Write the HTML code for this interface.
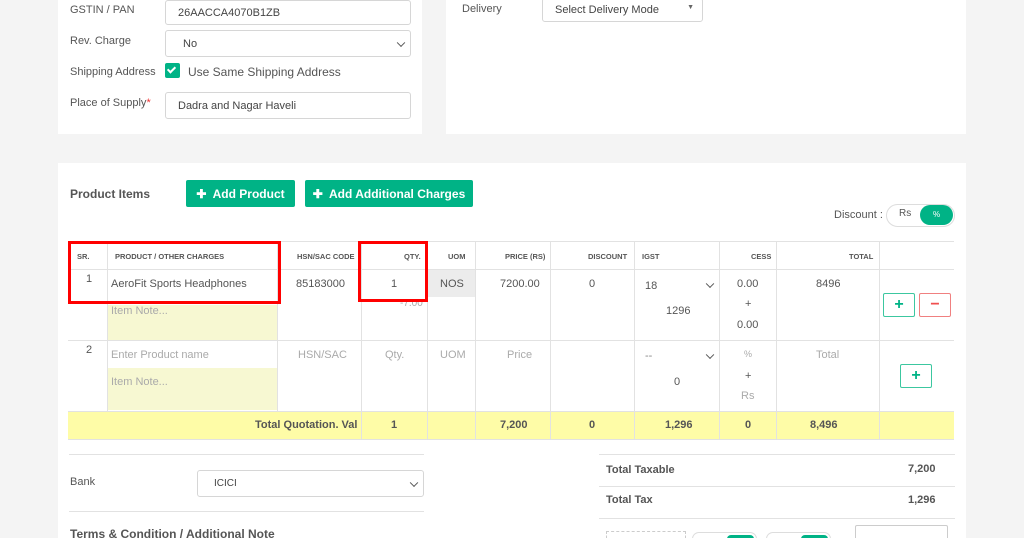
<!DOCTYPE html>
<html style="height:538px;overflow:hidden"><head><meta charset="utf-8"><style>
*{box-sizing:border-box;margin:0;padding:0}
body{width:1024px;height:538px;overflow:hidden;background:#f4f4f4;font-family:"Liberation Sans",sans-serif;color:#444;font-size:11px;position:relative}
.a{position:absolute}
.card{position:absolute;background:#fff}
.inp{position:absolute;border:1px solid #d6d6d6;border-radius:3px;background:#fff;font-size:11px;color:#444;padding-left:12px;display:flex;align-items:center}
.chev{position:absolute;right:6px;top:50%;width:6px;height:6px;border-right:1.6px solid #555;border-bottom:1.6px solid #555;transform:translateY(-70%) rotate(45deg)}
.btn{position:absolute;background:#00b386;color:#fff;font-weight:bold;font-size:12px;display:flex;align-items:center;justify-content:center;border-radius:2px}
.vl{position:absolute;width:1px;background:#e2e2e2}
.hl{position:absolute;height:1px;background:#e2e2e2}
.th{position:absolute;font-size:7.5px;font-weight:bold;color:#555;top:252px}
.t{position:absolute;font-size:11px;color:#555}
.ph{color:#aaa}
.red{position:absolute;border:3px solid #f00}
.sb{position:absolute;background:#fff;border-radius:2px;display:flex;align-items:center;justify-content:center;font-weight:bold;font-size:16px}
</style></head><body>
<div class="card" style="left:58px;top:0;width:364px;height:134px"></div>
<div class="card" style="left:446px;top:0;width:520px;height:134px"></div>
<div class="card" style="left:58px;top:163px;width:908px;height:375px"></div>

<div class="t" style="left:70px;top:4px">GSTIN / PAN</div>
<div class="inp" style="left:165px;top:0;width:246px;height:25px">26AACCA4070B1ZB</div>
<div class="t" style="left:70px;top:35px">Rev. Charge</div>
<div class="inp" style="left:165px;top:30px;width:246px;height:27px;padding-left:17px">No<span class="chev"></span></div>
<div class="t" style="left:70px;top:66px">Shipping Address</div>
<div class="a" style="left:165px;top:63px;width:15px;height:15px;background:#00b386;border-radius:2px"><div class="a" style="left:4px;top:2px;width:5px;height:8px;border-right:2px solid #fff;border-bottom:2px solid #fff;transform:rotate(45deg)"></div></div>
<div class="t" style="left:188px;top:65px;font-size:12px">Use Same Shipping Address</div>
<div class="t" style="left:70px;top:97px">Place of Supply<span style="color:#e33">*</span></div>
<div class="inp" style="left:165px;top:92px;width:246px;height:27px">Dadra and Nagar Haveli</div>

<div class="t" style="left:462px;top:3px">Delivery</div>
<div class="inp" style="left:542px;top:-2px;width:161px;height:24px;padding-left:12px">Select Delivery Mode<span class="a" style="right:8px;top:5px;font-size:7px;color:#666">▼</span></div>

<div class="t" style="left:70px;top:187px;font-weight:bold;font-size:12px">Product Items</div>
<div class="btn" style="left:186px;top:180px;width:109px;height:27px">✚&nbsp; Add Product</div>
<div class="btn" style="left:305px;top:180px;width:168px;height:27px">✚&nbsp; Add Additional Charges</div>

<div class="t" style="left:834px;top:209px">Discount :</div>
<div class="a" style="left:886px;top:204px;width:69px;height:23px;border:1px solid #ddd;border-radius:12px;background:#fff"></div>
<div class="t" style="left:899px;top:208px;font-size:10px">Rs</div>
<div class="a" style="left:920px;top:205px;width:33px;height:20px;border-radius:10px;background:#00b386;color:#fff;font-size:8px;text-align:center;line-height:20px">%</div>

<div class="a" style="left:68px;top:411px;width:886px;height:28px;background:#fefca7"></div>
<div class="a" style="left:108px;top:305px;width:169px;height:35px;background:#f7f8d2"></div>
<div class="a" style="left:108px;top:368px;width:169px;height:42px;background:#f7f8d2"></div>
<div class="a" style="left:428px;top:270px;width:47px;height:27px;background:#ececec"></div>
<div class="hl" style="left:68px;top:241px;width:886px"></div>
<div class="hl" style="left:68px;top:269px;width:886px"></div>
<div class="hl" style="left:68px;top:340px;width:886px"></div>
<div class="hl" style="left:68px;top:411px;width:886px"></div>
<div class="hl" style="left:68px;top:439px;width:886px"></div>
<div class="vl" style="left:107px;top:241px;height:170px"></div>
<div class="vl" style="left:277px;top:241px;height:170px"></div>
<div class="vl" style="left:361px;top:241px;height:198px"></div>
<div class="vl" style="left:427px;top:241px;height:198px"></div>
<div class="vl" style="left:475px;top:241px;height:198px"></div>
<div class="vl" style="left:550px;top:241px;height:198px"></div>
<div class="vl" style="left:634px;top:241px;height:198px"></div>
<div class="vl" style="left:719px;top:241px;height:198px"></div>
<div class="vl" style="left:776px;top:241px;height:198px"></div>
<div class="vl" style="left:879px;top:241px;height:198px"></div>

<div class="th" style="left:77px">SR.</div>
<div class="th" style="left:115px">PRODUCT / OTHER CHARGES</div>
<div class="th" style="left:297px">HSN/SAC CODE</div>
<div class="th" style="left:404px">QTY.</div>
<div class="th" style="left:448px">UOM</div>
<div class="th" style="left:505px">PRICE (RS)</div>
<div class="th" style="left:588px">DISCOUNT</div>
<div class="th" style="left:642px">IGST</div>
<div class="th" style="left:751px">CESS</div>
<div class="th" style="left:849px">TOTAL</div>

<div class="t" style="left:86px;top:273px">1</div>
<div class="t" style="left:111px;top:278px">AeroFit Sports Headphones</div>
<div class="t ph" style="left:111px;top:305px">Item Note...</div>
<div class="t" style="left:296px;top:278px">85183000</div>
<div class="t" style="left:391px;top:278px">1</div>
<div class="t ph" style="left:400px;top:298px;font-size:10px">-7.00</div>
<div class="t" style="left:440px;top:278px">NOS</div>
<div class="t" style="left:500px;top:278px">7200.00</div>
<div class="t" style="left:589px;top:278px">0</div>
<div class="t" style="left:645px;top:280px">18</div><span class="chev" style="left:707px;right:auto;top:285px"></span>
<div class="t" style="left:666px;top:305px">1296</div>
<div class="t" style="left:737px;top:278px">0.00</div>
<div class="t" style="left:745px;top:298px">+</div>
<div class="t" style="left:737px;top:319px">0.00</div>
<div class="t" style="left:816px;top:278px">8496</div>
<div class="sb" style="left:883px;top:293px;width:32px;height:24px;border:1px solid #3cc7a0;color:#00b386">+</div>
<div class="sb" style="left:919px;top:293px;width:32px;height:24px;border:1px solid #f08080;color:#f05050">−</div>

<div class="t" style="left:86px;top:344px">2</div>
<div class="t ph" style="left:111px;top:349px">Enter Product name</div>
<div class="t ph" style="left:111px;top:376px">Item Note...</div>
<div class="t ph" style="left:298px;top:349px">HSN/SAC</div>
<div class="t ph" style="left:385px;top:349px">Qty.</div>
<div class="t ph" style="left:440px;top:349px">UOM</div>
<div class="t ph" style="left:507px;top:349px">Price</div>
<div class="t" style="left:645px;top:350px;color:#888">--</div><span class="chev" style="left:707px;right:auto;top:356px"></span>
<div class="t" style="left:674px;top:376px">0</div>
<div class="t ph" style="left:744px;top:349px;font-size:9px">%</div>
<div class="t" style="left:745px;top:370px">+</div>
<div class="t ph" style="left:741px;top:390px">Rs</div>
<div class="t ph" style="left:816px;top:349px">Total</div>
<div class="sb" style="left:900px;top:364px;width:32px;height:24px;border:1px solid #3cc7a0;color:#00b386">+</div>

<div class="t" style="left:255px;top:419px;font-weight:bold">Total Quotation. Val</div>
<div class="t" style="left:391px;top:419px;font-weight:bold">1</div>
<div class="t" style="left:500px;top:419px;font-weight:bold">7,200</div>
<div class="t" style="left:589px;top:419px;font-weight:bold">0</div>
<div class="t" style="left:665px;top:419px;font-weight:bold">1,296</div>
<div class="t" style="left:745px;top:419px;font-weight:bold">0</div>
<div class="t" style="left:810px;top:419px;font-weight:bold">8,496</div>

<div class="red" style="left:68px;top:241px;width:213px;height:63px"></div>
<div class="red" style="left:358px;top:241px;width:70px;height:61px"></div>

<div class="hl" style="left:69px;top:454px;width:355px"></div>
<div class="hl" style="left:69px;top:511px;width:355px"></div>
<div class="t" style="left:70px;top:476px">Bank</div>
<div class="inp" style="left:197px;top:470px;width:227px;height:27px;padding-left:16px;font-size:10px">ICICI<span class="chev"></span></div>
<div class="t" style="left:70px;top:527px;font-weight:bold;font-size:12px">Terms &amp; Condition / Additional Note</div>

<div class="hl" style="left:599px;top:454px;width:356px"></div>
<div class="hl" style="left:599px;top:486px;width:356px"></div>
<div class="hl" style="left:599px;top:518px;width:356px"></div>
<div class="t" style="left:606px;top:464px;font-weight:bold">Total Taxable</div>
<div class="t" style="left:908px;top:463px;font-weight:bold">7,200</div>
<div class="t" style="left:606px;top:494px;font-weight:bold">Total Tax</div>
<div class="t" style="left:908px;top:494px;font-weight:bold">1,296</div>
<div class="a" style="left:606px;top:531px;width:80px;height:12px;border:1px dashed #ccc"></div>
<div class="a" style="left:692px;top:532px;width:65px;height:14px;border:1px solid #ddd;border-radius:8px"></div>
<div class="a" style="left:727px;top:535px;width:27px;height:8px;border-radius:6px;background:#00b386"></div>
<div class="a" style="left:766px;top:532px;width:65px;height:14px;border:1px solid #ddd;border-radius:8px"></div>
<div class="a" style="left:801px;top:535px;width:27px;height:8px;border-radius:6px;background:#00b386"></div>
<div class="a" style="left:855px;top:525px;width:93px;height:20px;border:1px solid #ccc;border-radius:2px;background:#fff"></div>
</body></html>
